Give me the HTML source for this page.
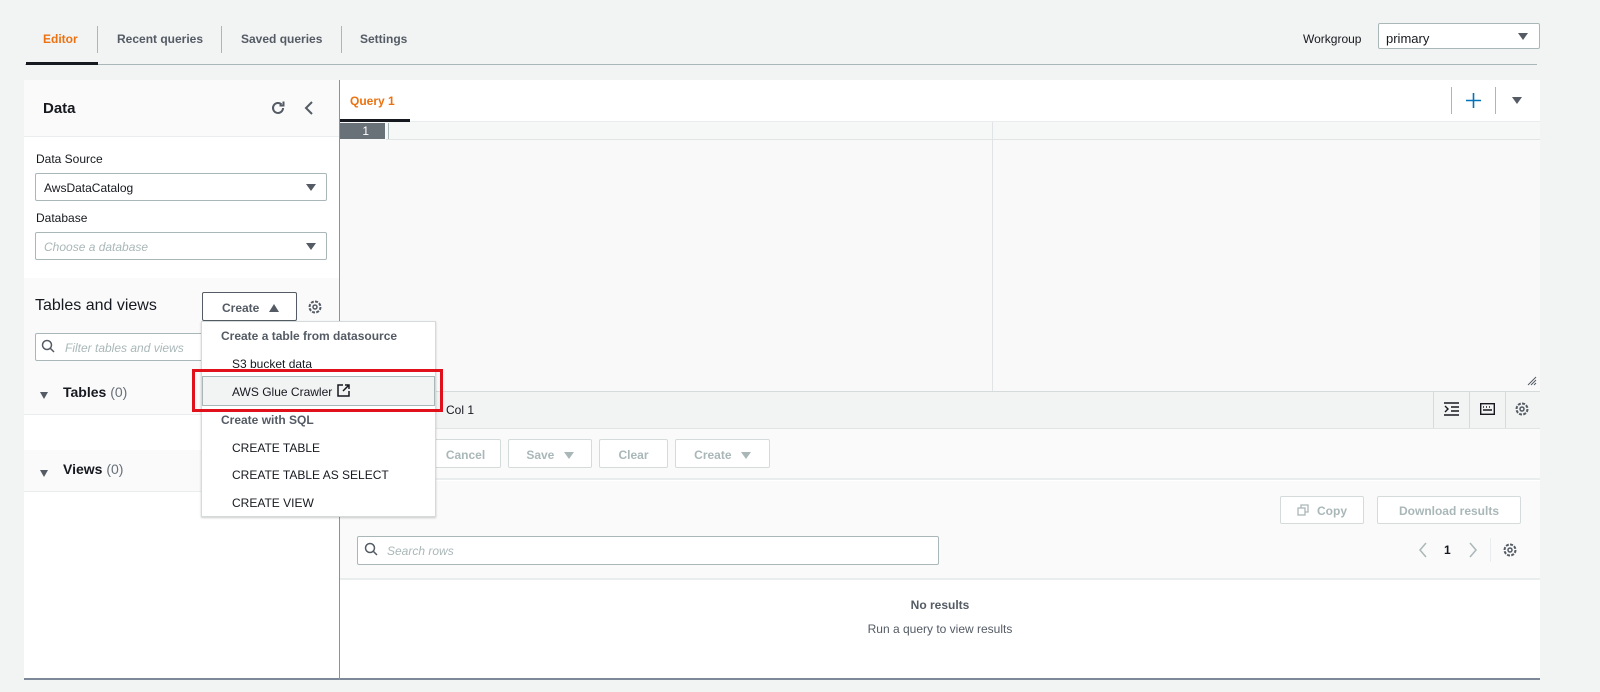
<!DOCTYPE html>
<html><head><style>
*{box-sizing:border-box;margin:0;padding:0}
body{width:1600px;height:692px;background:#f2f3f3;font-family:"Liberation Sans",sans-serif;color:#16191f;position:relative;overflow:hidden;font-size:12px}
.a{position:absolute}
.tab{position:absolute;top:32px;font-size:12px;font-weight:bold;color:#545b64}
.sep{position:absolute;top:26px;width:1px;height:27px;background:#aab7b8}
.btn{position:absolute;border:1px solid #d5dbdb;background:#fff;color:#aab7b8;font-weight:bold;font-size:12px;text-align:center;border-radius:2px}
.tri{display:inline-block;width:0;height:0;border-left:5px solid transparent;border-right:5px solid transparent;border-top:7px solid #545b64}
.sel{position:absolute;background:#fff;border:1px solid #aab7b8;border-radius:2px;font-size:12px}
</style></head><body>
<div class="tab" style="left:43px;color:#ec7211">Editor</div>
<div class="sep" style="left:97px"></div>
<div class="tab" style="left:117px">Recent queries</div>
<div class="sep" style="left:221px"></div>
<div class="tab" style="left:241px">Saved queries</div>
<div class="sep" style="left:341px"></div>
<div class="tab" style="left:360px">Settings</div>
<div class="a" style="left:25px;top:64px;width:1512px;height:1px;background:#aab7b8"></div>
<div class="a" style="left:26px;top:62px;width:72px;height:3px;background:#16191f"></div>
<div class="a" style="left:1303px;top:32px;font-size:12px">Workgroup</div>
<div class="sel" style="left:1378px;top:23px;width:162px;height:26px;padding:7px 7px;font-size:13px">primary<span class="tri" style="position:absolute;right:11px;top:9px"></span></div>

<!-- main panel -->
<div class="a" style="left:24px;top:80px;width:1516px;height:600px;background:#fff;border-bottom:2px solid #7d8998"></div>
<!-- left -->
<div class="a" style="left:24px;top:80px;width:315px;height:57px;background:#fafafa;border-bottom:1px solid #eaeded"></div>
<div class="a" style="left:43px;top:100px;font-size:15px;font-weight:bold">Data</div>
<svg class="a" style="left:270px;top:100px" width="16" height="16" viewBox="0 0 16 16"><path d="M13 8a5 5 0 1 1-1.5-3.6" fill="none" stroke="#545b64" stroke-width="2"/><path d="M13.5 1.5v4h-4" fill="none" stroke="#545b64" stroke-width="2"/></svg>
<svg class="a" style="left:303px;top:100px" width="12" height="16"><path d="M9 2L3 8l6 6" fill="none" stroke="#545b64" stroke-width="2"/></svg>
<div class="a" style="left:36px;top:152px;font-size:12px">Data Source</div>
<div class="sel" style="left:35px;top:173px;width:292px;height:28px;padding:7px 8px">AwsDataCatalog<span class="tri" style="position:absolute;right:10px;top:10px"></span></div>
<div class="a" style="left:36px;top:211px;font-size:12px">Database</div>
<div class="sel" style="left:35px;top:232px;width:292px;height:28px;padding:7px 8px;color:#aab7b8;font-style:italic">Choose a database<span class="tri" style="position:absolute;right:10px;top:10px"></span></div>
<div class="a" style="left:24px;top:278px;width:315px;height:137px;background:#fafafa;border-bottom:1px solid #eaeded"></div>
<div class="a" style="left:24px;top:450px;width:315px;height:42px;background:#fafafa;border-bottom:1px solid #eaeded"></div>
<div class="a" style="left:35px;top:297px;font-size:16px">Tables and views</div>
<div class="a" style="left:202px;top:292px;width:95px;height:29px;border:1px solid #545b64;background:#fff;border-radius:2px;font-size:12px;font-weight:bold;color:#545b64;padding:8px 0 0 19px">Create <span style="display:inline-block;margin-left:6px;width:0;height:0;border-left:5px solid transparent;border-right:5px solid transparent;border-bottom:8px solid #545b64"></span></div>
<svg class="a" style="left:307px;top:299px" width="16" height="16" viewBox="0 0 16 16"><circle cx="8" cy="8" r="5.5" fill="none" stroke="#545b64" stroke-width="2" stroke-dasharray="3 1.3"/><circle cx="8" cy="8" r="2" fill="none" stroke="#545b64" stroke-width="1.5"/></svg>
<div class="a" style="left:35px;top:333px;width:170px;height:28px;background:#fff;border:1px solid #aab7b8;border-radius:2px;padding:7px 0 0 29px;color:#aab7b8;font-style:italic;font-size:12px">Filter tables and views</div>
<svg class="a" style="left:41px;top:339px" width="14" height="14"><circle cx="6" cy="6" r="4.5" fill="none" stroke="#545b64" stroke-width="1.5"/><path d="M9.5 9.5L13 13" stroke="#545b64" stroke-width="1.5"/></svg>
<div class="a" style="left:40px;top:388px" ><span class="tri" style="border-left-width:4px;border-right-width:4px"></span></div>
<div class="a" style="left:63px;top:384px;font-size:14px;font-weight:bold">Tables <span style="font-weight:normal;color:#687078">(0)</span></div>
<div class="a" style="left:40px;top:466px"><span class="tri" style="border-left-width:4px;border-right-width:4px"></span></div>
<div class="a" style="left:63px;top:461px;font-size:14px;font-weight:bold">Views <span style="font-weight:normal;color:#687078">(0)</span></div>
<div class="a" style="left:339px;top:80px;width:1px;height:600px;background:#879596"></div>

<!-- editor -->
<div class="a" style="left:340px;top:80px;width:1200px;height:42px;background:#fff;border-bottom:1px solid #eaeded"></div>
<div class="a" style="left:350px;top:94px;font-size:12px;font-weight:bold;color:#ec7211">Query 1</div>
<div class="a" style="left:340px;top:119px;width:70px;height:3px;background:#16191f"></div>
<div class="a" style="left:1451px;top:87px;width:1px;height:27px;background:#aab7b8"></div>
<div class="a" style="left:1495px;top:87px;width:1px;height:27px;background:#aab7b8"></div>
<svg class="a" style="left:1466px;top:93px" width="15" height="15"><path d="M7.5 0v15M0 7.5h15" stroke="#0073bb" stroke-width="1.6"/></svg>
<span class="tri a" style="left:1512px;top:97px"></span>
<div class="a" style="left:340px;top:122px;width:1200px;height:270px;background:#f9f9f9"></div>
<div class="a" style="left:386px;top:122px;width:1154px;height:18px;background:#f6f7f7;border-bottom:1px solid #e1e4e4"></div>
<div class="a" style="left:340px;top:123px;width:45px;height:16px;background:#687078;color:#fff;font-size:12px;text-align:right;padding:1px 16px 0 0">1</div>
<div class="a" style="left:388px;top:123px;width:1px;height:16px;background:#aab7b8"></div>
<div class="a" style="left:992px;top:122px;width:1px;height:270px;background:#e1e4e4"></div>
<svg class="a" style="left:1527px;top:376px" width="10" height="10"><path d="M1 9L9 1M4 9L9 4M7 9L9 7" stroke="#545b64"/></svg>
<div class="a" style="left:340px;top:391px;width:1200px;height:38px;background:#f2f3f3;border-top:1px solid #d5dbdb;border-bottom:1px solid #e1e4e4"></div>
<div class="a" style="left:446px;top:403px;font-size:12px">Col 1</div>
<div class="a" style="left:1433px;top:392px;width:1px;height:36px;background:#d5dbdb"></div>
<div class="a" style="left:1469px;top:392px;width:1px;height:36px;background:#d5dbdb"></div>
<div class="a" style="left:1505px;top:392px;width:1px;height:36px;background:#d5dbdb"></div>
<svg class="a" style="left:1444px;top:402px" width="16" height="14"><path d="M0 1h15M7 5h8M7 9h8M0 13h15M1 4l3 3-3 3" fill="none" stroke="#16191f" stroke-width="1.4"/></svg>
<svg class="a" style="left:1480px;top:403px" width="15" height="12"><rect x=".7" y=".7" width="13.6" height="10.6" fill="none" stroke="#16191f" stroke-width="1.4"/><path d="M3 4h1M6 4h1M9 4h1M12 4h0M3 7h9" stroke="#16191f" stroke-width="1.4"/></svg>
<svg class="a" style="left:1514px;top:401px" width="16" height="16" viewBox="0 0 16 16"><circle cx="8" cy="8" r="5.5" fill="none" stroke="#545b64" stroke-width="2" stroke-dasharray="3 1.3"/><circle cx="8" cy="8" r="2" fill="none" stroke="#545b64" stroke-width="1.5"/></svg>
<div class="a" style="left:340px;top:429px;width:1200px;height:51px;background:#fafafa;border-bottom:2px solid #eaeded"></div>
<div class="btn" style="left:430px;top:439px;width:71px;height:29px;padding-top:8px">Cancel</div>
<div class="btn" style="left:508px;top:439px;width:84px;height:29px;padding-top:8px">Save <span class="tri" style="border-top-color:#aab7b8;margin-left:6px"></span></div>
<div class="btn" style="left:599px;top:439px;width:69px;height:29px;padding-top:8px">Clear</div>
<div class="btn" style="left:675px;top:439px;width:95px;height:29px;padding-top:8px">Create <span class="tri" style="border-top-color:#aab7b8;margin-left:6px"></span></div>
<div class="a" style="left:340px;top:481px;width:1200px;height:99px;background:#fafafa;border-bottom:2px solid #eaeded"></div>
<div class="btn" style="left:1280px;top:496px;width:84px;height:28px;padding-top:7px"><svg width="12" height="12" style="vertical-align:-1px;margin-right:8px"><rect x="1" y="4" width="7" height="7" fill="none" stroke="#aab7b8" stroke-width="1.3"/><path d="M4 4V1h7v7H8" fill="none" stroke="#aab7b8" stroke-width="1.3"/></svg>Copy</div>
<div class="btn" style="left:1377px;top:496px;width:144px;height:28px;padding-top:7px">Download results</div>
<div class="a" style="left:357px;top:536px;width:582px;height:29px;background:#fff;border:1px solid #aab7b8;border-radius:2px;padding:7px 0 0 29px;color:#aab7b8;font-style:italic">Search rows</div>
<svg class="a" style="left:364px;top:542px" width="14" height="14"><circle cx="6" cy="6" r="4.5" fill="none" stroke="#545b64" stroke-width="1.5"/><path d="M9.5 9.5L13 13" stroke="#545b64" stroke-width="1.5"/></svg>
<svg class="a" style="left:1418px;top:542px" width="10" height="16"><path d="M8 1L2 8l6 7" fill="none" stroke="#aab7b8" stroke-width="1.5"/></svg>
<div class="a" style="left:1444px;top:543px;font-weight:bold;font-size:12px">1</div>
<svg class="a" style="left:1468px;top:542px" width="10" height="16"><path d="M2 1l6 7-6 7" fill="none" stroke="#aab7b8" stroke-width="1.5"/></svg>
<div class="a" style="left:1490px;top:538px;width:1px;height:24px;background:#eaeded"></div>
<svg class="a" style="left:1502px;top:542px" width="16" height="16" viewBox="0 0 16 16"><circle cx="8" cy="8" r="5.5" fill="none" stroke="#545b64" stroke-width="2" stroke-dasharray="3 1.3"/><circle cx="8" cy="8" r="2" fill="none" stroke="#545b64" stroke-width="1.5"/></svg>
<div class="a" style="left:340px;top:598px;width:1200px;text-align:center;font-weight:bold;color:#545b64;font-size:12px">No results</div>
<div class="a" style="left:340px;top:622px;width:1200px;text-align:center;color:#545b64;font-size:12px">Run a query to view results</div>

<!-- dropdown -->
<div class="a" style="left:201px;top:321px;width:235px;height:196px;background:#fff;border:1px solid #d5dbdb;box-shadow:0 1px 2px rgba(0,0,0,.2)"></div>
<div class="a" style="left:221px;top:329px;font-weight:bold;color:#545b64;font-size:12px">Create a table from datasource</div>
<div class="a" style="left:232px;top:357px;font-size:12px">S3 bucket data</div>
<div class="a" style="left:202px;top:376px;width:233px;height:30px;background:#f2f3f3;border:1px solid #aab7b8"></div>
<div class="a" style="left:232px;top:385px;font-size:12px">AWS Glue Crawler</div>
<svg class="a" style="left:337px;top:384px" width="13" height="13"><path d="M6 1H1v11h11V7M8 1h4v4M12 1L6 7" fill="none" stroke="#16191f" stroke-width="1.5"/></svg>
<div class="a" style="left:192px;top:369px;width:251px;height:43px;border:3px solid #e0111b"></div>
<div class="a" style="left:221px;top:413px;font-weight:bold;color:#545b64;font-size:12px">Create with SQL</div>
<div class="a" style="left:232px;top:441px;font-size:12px">CREATE TABLE</div>
<div class="a" style="left:232px;top:468px;font-size:12px">CREATE TABLE AS SELECT</div>
<div class="a" style="left:232px;top:496px;font-size:12px">CREATE VIEW</div>
</body></html>
